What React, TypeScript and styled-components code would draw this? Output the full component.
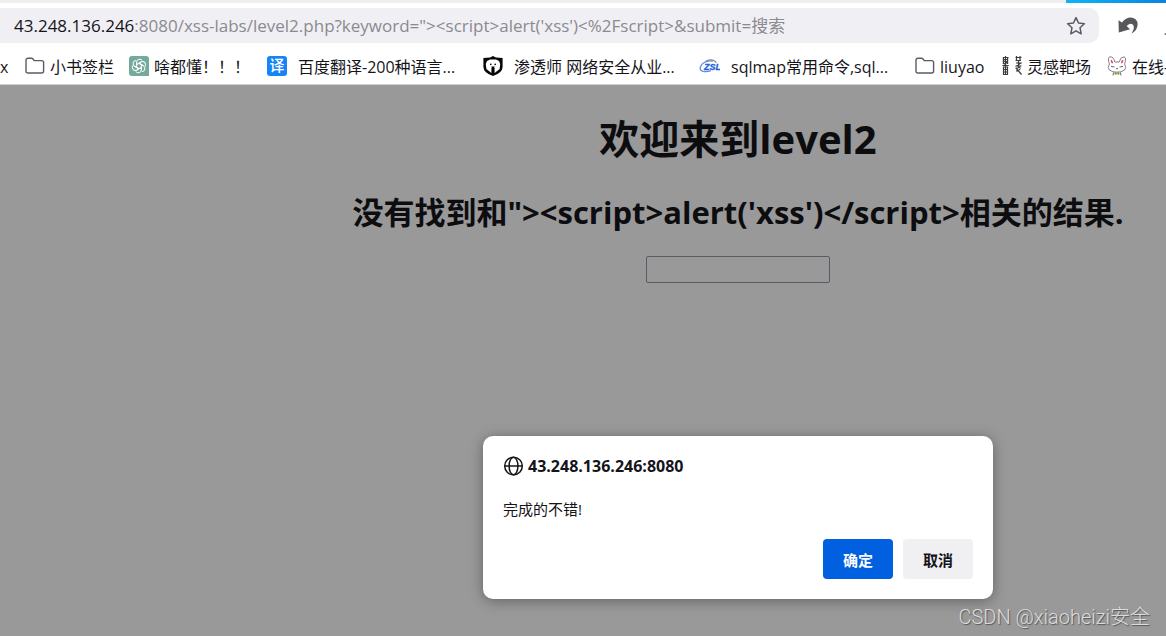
import React from "react";
import styled, { createGlobalStyle } from "styled-components";

const GlobalStyle = createGlobalStyle`
  *, *::before, *::after { box-sizing: border-box; }
  body {
    margin: 0;
    background: #fff;
    color: #15141a;
    font-family: "Open Sans", "Noto Sans CJK SC", sans-serif;
    font-size: 16px;
    overflow: hidden;
  }
  button, input { font: inherit; }
`;

const Window = styled.div`
  display: flex;
  flex-direction: column;
  min-height: 100vh;
`;

const TabStrip = styled.div`
  display: flex;
  justify-content: flex-end;
  height: 3px;
  background: #eeeeee;
`;

const TabAccent = styled.div`
  width: 100px;
  background: linear-gradient(90deg, #0db4f5, #0a84e0);
`;

const NavBar = styled.div`
  display: flex;
  align-items: center;
  padding-top: 5px;
`;

const AddressBar = styled.div`
  display: flex;
  flex: 1;
  align-items: center;
  justify-content: space-between;
  height: 35px;
  padding: 0 13px 0 14px;
  border-radius: 0 10px 10px 0;
  background: #f0eff4;
`;

const Address = styled.span`
  color: #8b8a90;
  font-size: 17px;
  line-height: 24px;
  white-space: nowrap;
`;

const Host = styled.span`
  color: #15141a;
`;

const IconButton = styled.button`
  display: flex;
  padding: 0;
  border: 0;
  background: none;
  color: #5b5b66;
`;

const NavActions = styled.div`
  display: flex;
  align-items: center;
  justify-content: space-between;
  width: 67px;
  padding-left: 19px;
`;

const Bookmarks = styled.nav`
  display: flex;
  height: 42px;
  padding-top: 11px;
  border-bottom: 1px solid #cfcfd2;
  overflow: hidden;
`;

const Bookmark = styled.a<{ $width: number; $wide?: boolean }>`
  display: flex;
  flex: none;
  align-items: center;
  gap: ${(p) => (p.$wide ? 11 : 5)}px;
  width: ${(p) => p.$width}px;
  height: 26px;
  color: #15141a;
  line-height: 26px;
  text-decoration: none;
  white-space: nowrap;
  svg { flex: none; margin-bottom: 2px; }
`;

const Page = styled.main`
  display: flex;
  flex: 1;
  flex-direction: column;
  align-items: center;
  padding: 27px 0 0 310px;
  background: #99999a;
  color: #0d0d10;
`;

const Title = styled.h1`
  margin: 0 0 26px;
  font-size: 40px;
  line-height: 54px;
`;

const Subtitle = styled.h2`
  margin: 0 0 24px;
  font-size: 31px;
  line-height: 40px;
  white-space: nowrap;
`;

const Keyword = styled.input`
  width: 184px;
  height: 27px;
  padding: 0 4px;
  border: 1px solid #5b5a66;
  border-radius: 2px;
  background: transparent;
`;

const Dialog = styled.section`
  width: 510px;
  margin-top: 153px;
  padding: 20px;
  border-radius: 10px;
  background: #fff;
  color: #15141a;
  font-size: 15px;
  box-shadow: 0 2px 14px rgba(0, 0, 0, 0.35);
`;

const DialogHeader = styled.header`
  display: flex;
  align-items: center;
  gap: 4px;
  font-size: 16px;
  font-weight: 700;
  line-height: 20px;
`;

const Message = styled.p`
  margin: 23px 0 20px;
  line-height: 20px;
`;

const Actions = styled.div`
  display: flex;
  justify-content: flex-end;
  gap: 10px;
`;

const DialogButton = styled.button<{ $primary?: boolean }>`
  height: 40px;
  padding: 0 20px;
  border: 0;
  border-radius: 4px;
  background: ${(p) => (p.$primary ? "#0060df" : "#f0f0f2")};
  color: ${(p) => (p.$primary ? "#fbfbfe" : "#15141a")};
  font-weight: 700;
`;

const Watermark = styled.div`
  position: absolute;
  right: 16px;
  bottom: 6px;
  color: #dcdcdc;
  font-family: Roboto, "Noto Sans CJK SC", sans-serif;
  font-size: 20px;
  font-weight: 300;
  line-height: 26px;
  text-shadow: 1px 1px 1px #555;
`;

const FolderIcon = () => (
  <svg width="20" height="18" viewBox="0 0 20 18" fill="none" stroke="#5b5b66" strokeWidth="1.4">
    <path d="M1 3.2Q1 1.2 3 1.2H6.6Q7.4 1.2 8 2L9.2 3.6H16.6Q18.6 3.6 18.6 5.6V14Q18.6 16 16.6 16H3Q1 16 1 14Z" />
  </svg>
);

const ChatIcon = () => (
  <svg width="20" height="20" viewBox="0 0 20 20">
    <path d="M3 0H17Q20 0 20 3V20H3Q0 20 0 17V3Q0 0 3 0Z" fill="#74aa9c" />
    <g fill="none" stroke="#fff" strokeWidth="1">
      {[0, 60, 120, 180, 240, 300].map((a) => (
        <path key={a} transform={`rotate(${a} 10 10)`} d="M7.6 11.4V6.2A3.1 3.1 0 0 1 13.4 4.8M7.6 8.6L12 6" />
      ))}
    </g>
  </svg>
);

const TranslateIcon = () => (
  <svg width="20" height="20" viewBox="0 0 20 20">
    <rect width="20" height="20" rx="3" fill="#1484f8" />
    <text x="10" y="15" textAnchor="middle" fill="#fff" fontSize="15" fontFamily="Noto Sans CJK SC, sans-serif" fontWeight="500">译</text>
  </svg>
);

const ShieldIcon = () => (
  <svg width="20" height="20" viewBox="0 0 20 20">
    <path d="M10 0L13 1.4L19.6 2V11Q19.4 17 10 20Q.6 17 .4 11V2L7 1.4Z" fill="#080808" />
    <path d="M4 5L7 3.4H13L16 5L17.2 8L16.6 13L11.6 17V12H8.4V17L3.4 13L2.8 8Z" fill="#fff" />
    <circle cx="7.8" cy="8.4" r=".8" />
    <circle cx="12.2" cy="8.4" r=".8" />
    <path d="M8.2 10.6H11.8L10.8 12.4V17H9.2V12.4Z" />
  </svg>
);

const ZslIcon = () => (
  <svg width="21" height="20" viewBox="0 0 21 20">
    <path d="M14 5Q7 4 2.6 8.6Q-1 14 4 15.4Q8 16.2 12 14.6" fill="none" stroke="#5d8ff0" strokeWidth="1.3" />
    <path d="M7 5.2Q14 2 17.4 6.6" fill="none" stroke="#8b8b8b" strokeWidth="1.4" />
    <text x="5" y="13.6" fill="#2360dc" stroke="#2360dc" strokeWidth=".3" fontSize="9" fontWeight="700" fontStyle="italic" fontFamily="Liberation Sans, sans-serif">ZSL</text>
  </svg>
);

const RangeIcon = () => (
  <svg width="20" height="20" viewBox="0 0 20 20" fill="none" stroke="#3c3c3c" strokeWidth="1.2">
    <path d="M.8 1.5H6.5M1 3.5H6M1.5 5.5H5.5M2 5L5 6.5L1.5 8M.4 9.5H6.8M1.5 11H5.5V18.5H1.5ZM1.5 13.5H5.5M1.5 16H5.5M3.5 0V18M1.4 2V8M5.6 2V8" />
    <path d="M13.5 1.5H19.5M14.5 0V4M18 0V4M13.5 4.5H19M14 7H19L14.5 10H19.5M16.5 4V12M13.5 12.5L18.5 11M14 15Q17 15 18.5 12.5M14 12L19.5 18.5" />
  </svg>
);

const RabbitIcon = () => (
  <svg width="20" height="20" viewBox="0 0 20 20" fill="#fff" stroke="#77777a" strokeWidth=".9">
    <path d="M2.4 8Q.2 1.5 3 .8Q6.6.4 7.8 6H12.2Q13.6.4 17 .8Q19.8 1.6 17.6 8Q20 12 17.6 14Q14 16.4 10 16.2Q5.6 16.4 2.4 14Q0 12 2.4 8Z" />
    <path d="M4.2 4Q5.6 4.8 5.4 7.2Q4 6.4 4.2 4ZM15.8 4Q14.4 4.8 14.6 7.2Q16 6.4 15.8 4Z" fill="#e2417e" stroke="#e2417e" />
    <path d="M4 10.4L7.4 11M12.6 11L16 10.4M9 12.6H11M6.6 16.4L6 19.4M13.4 16.4L14 19.4" fill="none" stroke="#55555a" />
    <path d="M8 16.5L12 18.5V16.5L8 18.5Z" fill="#9aa84c" stroke="#8a9a44" />
  </svg>
);

const StarIcon = () => (
  <svg width="20" height="20" viewBox="0 0 20 20" fill="none" stroke="currentColor" strokeWidth="1.5" strokeLinejoin="round">
    <path d="M10 1.6L12.5 7L18.4 7.7L14 11.7L15.2 17.8L10 14.8L4.8 17.8L6 11.7L1.6 7.7L7.5 7Z" />
  </svg>
);

const UndoIcon = () => (
  <svg width="20" height="17" viewBox="0 0 20 17" fill="#58585a">
    <path d="M.5 3.2L4 5.6Q8 .4 13 .6Q19.4 1.2 19.6 7.4Q19.4 13.4 13.4 16.4Q16.6 12 15.6 8.8Q14.2 5.8 10.6 7.4L8.6 9L12 12.2L.8 15.4Z" />
  </svg>
);

const DownloadIcon = () => (
  <svg width="3" height="20" viewBox="0 0 3 20" stroke="#58585a" strokeWidth="1.6">
    <path d="M1.6 18H3" />
  </svg>
);

const GlobeIcon = () => (
  <svg width="21" height="20" viewBox="0 0 21 20" fill="none" stroke="#15141a" strokeWidth="1.5">
    <circle cx="10.5" cy="10" r="8.8" />
    <ellipse cx="10.5" cy="10" rx="4.4" ry="8.8" />
    <path d="M1.7 10H19.3" />
  </svg>
);

export default function App() {
  return (
    <Window>
      <GlobalStyle />
      <TabStrip>
        <TabAccent />
      </TabStrip>
      <NavBar>
        <AddressBar>
          <Address>
            <Host>43.248.136.246</Host>
            {`:8080/xss-labs/level2.php?keyword="><script>alert('xss')<%2Fscript>&submit=搜索`}
          </Address>
          <IconButton aria-label="Bookmark this page">
            <StarIcon />
          </IconButton>
        </AddressBar>
        <NavActions>
          <IconButton aria-label="Undo">
            <UndoIcon />
          </IconButton>
          <IconButton aria-label="Downloads">
            <DownloadIcon />
          </IconButton>
        </NavActions>
      </NavBar>
      <Bookmarks>
        <Bookmark href="#" $width={25}>x</Bookmark>
        <Bookmark href="#" $width={104}><FolderIcon />小书签栏</Bookmark>
        <Bookmark href="#" $width={138}><ChatIcon />啥都懂！！！</Bookmark>
        <Bookmark href="#" $width={216} $wide><TranslateIcon />百度翻译-200种语言...</Bookmark>
        <Bookmark href="#" $width={216} $wide><ShieldIcon />渗透师 网络安全从业...</Bookmark>
        <Bookmark href="#" $width={216} $wide><ZslIcon />sqlmap常用命令,sql...</Bookmark>
        <Bookmark href="#" $width={87}><FolderIcon />liuyao</Bookmark>
        <Bookmark href="#" $width={105}><RangeIcon />灵感靶场</Bookmark>
        <Bookmark href="#" $width={104}><RabbitIcon />在线-</Bookmark>
      </Bookmarks>
      <Page>
        <Title>欢迎来到level2</Title>
        <Subtitle>{`没有找到和"><script>alert('xss')</script>相关的结果.`}</Subtitle>
        <Keyword aria-label="keyword" />
        <Dialog role="dialog" aria-label="43.248.136.246:8080">
          <DialogHeader>
            <GlobeIcon />
            43.248.136.246:8080
          </DialogHeader>
          <Message>完成的不错!</Message>
          <Actions>
            <DialogButton $primary>确定</DialogButton>
            <DialogButton>取消</DialogButton>
          </Actions>
        </Dialog>
      </Page>
      <Watermark>CSDN @xiaoheizi安全</Watermark>
    </Window>
  );
}
